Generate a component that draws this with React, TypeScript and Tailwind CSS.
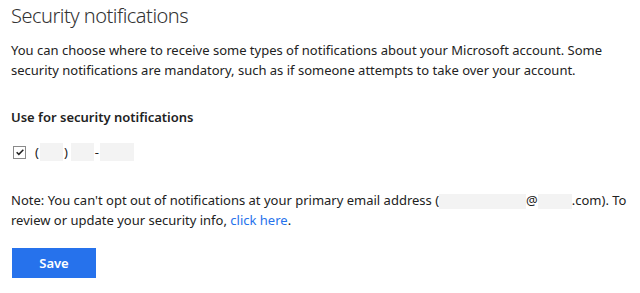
export default function App() {
  const font = { fontFamily: '"Segoe UI", "Noto Sans", "Open Sans", sans-serif' };
  return (
    <div className="min-h-[293px] w-[640px] bg-white pl-[11px] pt-[1px] text-[13px] leading-[20px] text-[#222]" style={font}>
      <h1 className="text-[20px] font-light leading-[30px] tracking-[-0.5px] text-[#333]">Security notifications</h1>

      <p className="mt-[9px]">
        You can choose where to receive some types of notifications about your Microsoft account. Some
        <br />
        security notifications are mandatory, such as if someone attempts to take over your account.
      </p>

      <h2 className="mt-[27px] font-semibold">Use for security notifications</h2>

      <label className="mt-[15px] flex h-[20px] items-center">
        <span className="ml-[2px] flex h-[13px] w-[13px] items-center justify-center border border-[#8a8a8a] bg-white">
          <svg viewBox="0 0 12 12" className="h-[10px] w-[10px]" aria-hidden>
            <path d="M2 6.2 4.6 8.8 10 3.2" fill="none" stroke="#222" strokeWidth={1.8} />
          </svg>
        </span>
        <span className="ml-[9px] flex items-center">
          (<span className="mx-[1px] inline-block h-[18px] w-[23px] bg-[#f3f3f3]" />)
          <span className="ml-[3px] inline-block h-[18px] w-[23px] bg-[#f3f3f3]" />
          <span className="mx-[1px]">-</span>
          <span className="inline-block h-[18px] w-[34px] bg-[#f3f3f3]" />
        </span>
      </label>

      <p className="mt-[28px]">
        Note: You can't opt out of notifications at your primary email address (
        <span className="inline-block h-[15px] w-[87px] align-middle bg-[#f3f3f3]" />@
        <span className="inline-block h-[15px] w-[34px] align-middle bg-[#f3f3f3]" />.com). To
        <br />
        review or update your security info,{" "}
        <a href="#" className="text-[#2672ec]">
          click here
        </a>
        .
      </p>

      <button type="button" className="mt-[18px] ml-[1px] h-[30px] w-[84px] bg-[#2672ec] text-[13px] font-semibold text-white">
        Save
      </button>
    </div>
  );
}
